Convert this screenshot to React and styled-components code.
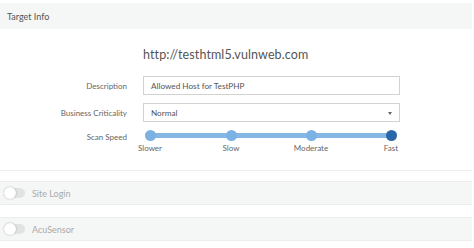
import React from "react";
import styled, { createGlobalStyle } from "styled-components";

const Global = createGlobalStyle`
  html, body { margin: 0; padding: 0; background: #fff; }
  body { font-family: Lato, "Open Sans", sans-serif; color: #555; }
  * { box-sizing: border-box; }
`;

const Page = styled.div`
  width: 472px;
  padding-top: 3px;
`;

const SectionHeader = styled.div`
  height: 26px;
  background: #f5f6f6;
  display: flex;
  align-items: center;
  padding-left: 7px;
  font-size: 9px;
  color: #555;
`;

const Body = styled.div`
  display: flex;
  flex-direction: column;
`;

const Url = styled.div`
  height: 47px;
  padding-left: 143px;
  display: flex;
  align-items: center;
  padding-top: 4px;
  font-size: 12.5px;
  color: #555;
  letter-spacing: 0.1px;
`;

const FormRow = styled.div`
  display: grid;
  grid-template-columns: 127px 257px;
  column-gap: 16px;
  align-items: ${(p) => (p.$top ? "start" : "center")};
  margin-bottom: ${(p) => p.$mb || 0}px;
`;

const Label = styled.div`
  text-align: right;
  font-size: 8px;
  color: #666;
  padding-top: ${(p) => p.$pt || 0}px;
`;

const Input = styled.div`
  height: 19px;
  border: 1px solid #d2d2d2;
  display: flex;
  align-items: center;
  padding-left: 7px;
  font-size: 8.2px;
  color: #555;
  position: relative;
`;

const Caret = styled.span`
  position: absolute;
  right: 7px;
  top: 8px;
  width: 0;
  height: 0;
  border-left: 2.5px solid transparent;
  border-right: 2.5px solid transparent;
  border-top: 3px solid #666;
`;

const Slider = styled.div`
  position: relative;
  height: 28px;
`;

const Track = styled.div`
  position: absolute;
  left: 7px;
  right: 9px;
  top: 6px;
  height: 5px;
  border-radius: 3px;
  background: #86b6e2;
`;

const Knob = styled.div`
  position: absolute;
  top: 3px;
  width: 11px;
  height: 11px;
  margin-left: -5.5px;
  border-radius: 50%;
  background: ${(p) => (p.$active ? "#2a67a8" : "#7cb1e4")};
`;

const Tick = styled.div`
  position: absolute;
  top: 16px;
  transform: translateX(-50%);
  font-size: 8px;
  color: #666;
  white-space: nowrap;
`;

const Divider = styled.div`
  height: 1px;
  background: #ececec;
  margin-top: 15px;
`;

const Panel = styled.div`
  margin-top: ${(p) => p.$mt}px;
  height: 24px;
  background: #f5f6f6;
  border-top: 1px solid #ececec;
  border-bottom: 1px solid #ececec;
  display: flex;
  align-items: center;
  padding-left: 5px;
  gap: 7px;
  font-size: 9px;
  color: #aaa;
`;

const Toggle = styled.div`
  position: relative;
  width: 20px;
  height: 10px;
  border-radius: 5px;
  background: #e2e2e2;
`;

const ToggleKnob = styled.div`
  position: absolute;
  left: -1px;
  top: -1px;
  width: 12px;
  height: 12px;
  border-radius: 50%;
  background: #fff;
  box-shadow: 0 0 2px rgba(0, 0, 0, 0.3);
`;

const speeds = ["Slower", "Slow", "Moderate", "Fast"];
const knobX = [7, 88, 168, 248];

export default function App() {
  return (
    <>
      <Global />
      <Page>
        <SectionHeader>Target Info</SectionHeader>
        <Body>
          <Url>http://testhtml5.vulnweb.com</Url>
          <FormRow $mb={8}>
            <Label>Description</Label>
            <Input>Allowed Host for TestPHP</Input>
          </FormRow>
          <FormRow $mb={5}>
            <Label>Business Criticality</Label>
            <Input>
              Normal
              <Caret />
            </Input>
          </FormRow>
          <FormRow $top>
            <Label $pt={5}>Scan Speed</Label>
            <Slider>
              <Track />
              {speeds.map((s, i) => (
                <React.Fragment key={s}>
                  <Knob $active={i === 3} style={{ left: knobX[i] }} />
                  <Tick style={{ left: knobX[i] }}>{s}</Tick>
                </React.Fragment>
              ))}
            </Slider>
          </FormRow>
        </Body>
        <Divider />
        <Panel $mt={10}>
          <Toggle>
            <ToggleKnob />
          </Toggle>
          Site Login
        </Panel>
        <Panel $mt={12}>
          <Toggle>
            <ToggleKnob />
          </Toggle>
          AcuSensor
        </Panel>
      </Page>
    </>
  );
}
